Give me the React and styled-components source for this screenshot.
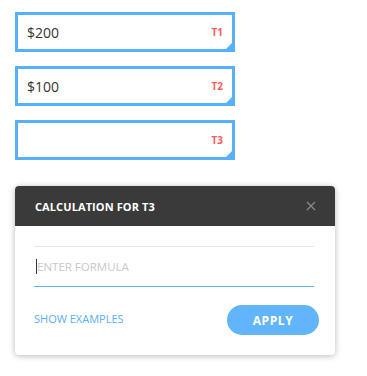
import React from 'react'
import styled, { createGlobalStyle } from 'styled-components'

const GlobalStyle = createGlobalStyle`
  body {
    margin: 0;
    background: #fff;
    font-family: "Open Sans", "Liberation Sans", sans-serif;
  }
`

const cells = [
  { value: '$200', tag: 'T1' },
  { value: '$100', tag: 'T2' },
  { value: '', tag: 'T3' },
]

export default function App() {
  return (
    <Page>
      <GlobalStyle />
      <Cells>
        {cells.map((cell) => (
          <Cell key={cell.tag}>
            <CellValue>{cell.value}</CellValue>
            <CellTag>{cell.tag}</CellTag>
            <Corner />
          </Cell>
        ))}
      </Cells>
      <Dialog>
        <DialogHeader>
          <DialogTitle>Calculation for T3</DialogTitle>
          <Close>
            <svg width="10" height="10" viewBox="0 0 10 10">
              <path d="M1 1L9 9M9 1L1 9" stroke="#8a8a8a" strokeWidth="1.2" />
            </svg>
          </Close>
        </DialogHeader>
        <DialogBody>
          <Divider />
          <FormulaField>
            <Caret />
            <Placeholder>Enter formula</Placeholder>
          </FormulaField>
          <Actions>
            <LinkButton>Show examples</LinkButton>
            <ApplyButton>Apply</ApplyButton>
          </Actions>
        </DialogBody>
      </Dialog>
    </Page>
  )
}

const Page = styled.div`
  padding: 12px 15px;
`

const Cells = styled.div`
  display: flex;
  flex-direction: column;
  gap: 14px;
  width: 220px;
`

const Cell = styled.div`
  position: relative;
  box-sizing: border-box;
  height: 40px;
  border: 3px solid #56b0fb;
  display: flex;
  align-items: center;
  justify-content: space-between;
  padding: 0 9px 0 9px;
`

const CellValue = styled.span`
  font-size: 14px;
  color: #333;
`

const CellTag = styled.span`
  font-size: 10px;
  font-weight: 700;
  color: #ff5a5a;
`

const Corner = styled.span`
  position: absolute;
  right: 0;
  bottom: 0;
  width: 0;
  height: 0;
  border-left: 6px solid transparent;
  border-bottom: 6px solid #56b0fb;
`

const Dialog = styled.div`
  margin-top: 26px;
  width: 320px;
  border-radius: 4px;
  overflow: hidden;
  background: #fff;
  box-shadow: 0 1px 6px rgba(0, 0, 0, 0.28);
`

const DialogHeader = styled.div`
  height: 40px;
  background: #3a3a3a;
  display: flex;
  align-items: center;
  justify-content: space-between;
  padding: 0 20px;
`

const DialogTitle = styled.span`
  color: #fff;
  font-size: 11px;
  font-weight: 700;
  text-transform: uppercase;
  letter-spacing: 0.1px;
`

const Close = styled.span`
  display: flex;
  margin-right: -1px;
`

const DialogBody = styled.div`
  padding: 20px 21px 20px 19px;
`

const Divider = styled.div`
  height: 1px;
  background: #e6e6e6;
`

const FormulaField = styled.div`
  height: 39px;
  border-bottom: 1px solid #62b2f7;
  display: flex;
  align-items: center;
  padding-left: 2px;
`

const Caret = styled.span`
  width: 1px;
  height: 15px;
  background: #333;
`

const Placeholder = styled.span`
  font-size: 11.5px;
  color: #c8c8c8;
  text-transform: uppercase;
`

const Actions = styled.div`
  display: flex;
  align-items: center;
  justify-content: space-between;
  margin-top: 18px;
`

const LinkButton = styled.span`
  font-size: 11px;
  color: #5aaef5;
  text-transform: uppercase;
  margin-top: -3px;
`

const ApplyButton = styled.button`
  width: 92px;
  height: 30px;
  border: none;
  border-radius: 15px;
  background: #62b5fb;
  color: #fff;
  font-family: inherit;
  font-size: 12px;
  font-weight: 700;
  letter-spacing: 0.6px;
  text-transform: uppercase;
  margin-right: -5px;
`
